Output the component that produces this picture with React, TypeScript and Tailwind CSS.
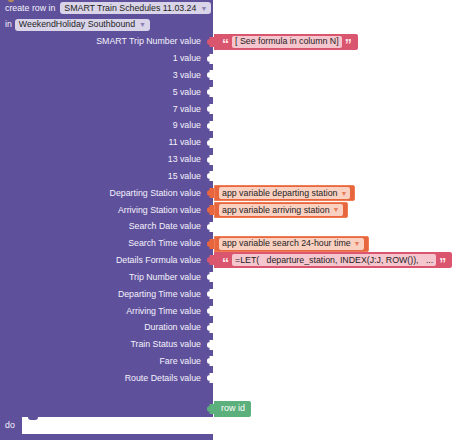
import React from "react";

const valueRows: { label: string; attach?: "trip" | "dep" | "arr" | "time" | "formula" }[] = [
  { label: "SMART Trip Number value", attach: "trip" },
  { label: "1 value" },
  { label: "3 value" },
  { label: "5 value" },
  { label: "7 value" },
  { label: "9 value" },
  { label: "11 value" },
  { label: "13 value" },
  { label: "15 value" },
  { label: "Departing Station value", attach: "dep" },
  { label: "Arriving Station value", attach: "arr" },
  { label: "Search Date value" },
  { label: "Search Time value", attach: "time" },
  { label: "Details Formula value", attach: "formula" },
  { label: "Trip Number value" },
  { label: "Departing Time value" },
  { label: "Arriving Time value" },
  { label: "Duration value" },
  { label: "Train Status value" },
  { label: "Fare value" },
  { label: "Route Details value" },
];

// cut-out on the block's right edge where a value plugs in
function Notch({ color = "#ffffff" }: { color?: string }) {
  return (
    <svg width="6" height="10" viewBox="0 0 6 10" className="shrink-0">
      <path d="M6 0 L6 10 L2.5 10 L2.5 7.5 C1 8 0 7 0 5 C0 3 1 2 2.5 2.5 L2.5 0 Z" fill={color} />
    </svg>
  );
}

function Tab({ color }: { color: string }) {
  return (
    <svg width="5" height="10" viewBox="0 0 5 10" className="shrink-0 -ml-[4px]">
      <path d="M5 0 L5 10 L2.5 10 L2.5 7.5 C1 8 0 7 0 5 C0 3 1 2 2.5 2.5 L2.5 0 Z" fill={color} />
    </svg>
  );
}

function Quote({ ch }: { ch: string }) {
  return (
    <span className="relative top-[2px] h-[13px] text-[14px] font-bold leading-none text-[#fde8ec] font-['Liberation_Sans',Arial,sans-serif]">
      {ch}
    </span>
  );
}

function TextBlock({ text }: { text: string }) {
  return (
    <div className="flex items-center">
      <Tab color="#d9566e" />
      <div className="flex h-[16px] items-center gap-[3px] rounded-r-[2px] bg-[#d9566e] pl-[8px] pr-[6px]">
        <Quote ch="“" />
        <span className="flex h-[12px] items-center rounded-[2px] bg-[#f6c6ce] px-[3px] text-[#1e1e1e] whitespace-pre">
          {text}
        </span>
        <Quote ch="”" />
      </div>
    </div>
  );
}

function VarBlock({ text }: { text: string }) {
  return (
    <div className="flex items-center">
      <Tab color="#e8663e" />
      <div className="flex h-[16px] items-center rounded-r-[2px] border border-[#f07d55] bg-[#e8663e] pl-[4px] pr-[4px]">
        <span className="flex h-[12px] items-center gap-[3px] rounded-[2px] bg-[#fad0c1] px-[3px] text-[#1e1e1e]">
          {text}
          <span className="text-[7px] text-[#e57b58]">▼</span>
        </span>
      </div>
    </div>
  );
}

function Attached({ kind }: { kind: string }) {
  if (kind === "trip") return <TextBlock text="[ See formula in column N]" />;
  if (kind === "dep") return <VarBlock text="app variable departing station" />;
  if (kind === "arr") return <VarBlock text="app variable arriving station" />;
  if (kind === "time") return <VarBlock text="app variable search 24-hour time" />;
  return <TextBlock text="=LET(   departure_station, INDEX(J:J, ROW()),   ..." />;
}

function Dropdown({ text }: { text: string }) {
  return (
    <span className="flex h-[12px] items-center gap-[4px] rounded-[3px] bg-[#d9d4e8] px-[4px] text-[#1e1e1e]">
      {text}
      <span className="text-[7px] text-[#8a80b3]">▼</span>
    </span>
  );
}

export default function App() {
  return (
    <div className="relative h-[440px] w-[474px] overflow-hidden bg-white text-[8.8px] leading-none text-[#f4f2fb] font-['Liberation_Sans',Arial,sans-serif]">
      <div className="absolute left-[8px] top-0 h-[2px] w-[6px] rounded-b-sm bg-[#b08a5a]" />
      <div className="flex flex-col">
        <div className="flex h-[16px] w-[213px] items-center gap-[5px] bg-[#5f509b] pl-[5px]">
          <span>create row in</span>
          <Dropdown text="SMART Train Schedules 11.03.24" />
        </div>
        <div className="flex h-[17.3px] w-[213px] items-center gap-[3px] bg-[#5f509b] pl-[5px]">
          <span>in</span>
          <Dropdown text="WeekendHoliday Southbound" />
        </div>

        {valueRows.map((r) => (
          <div key={r.label} className="flex h-[16.83px] items-center">
            <div className="flex h-full w-[213px] shrink-0 items-center justify-end bg-[#5f509b]">
              <span className="mr-[6px]">{r.label}</span>
              <Notch
                color={
                  r.attach
                    ? r.attach === "trip" || r.attach === "formula"
                      ? "#d9566e"
                      : "#e8663e"
                    : "#ffffff"
                }
              />
            </div>
            {r.attach && <Attached kind={r.attach} />}
          </div>
        ))}

        <div className="h-[14.3px] w-[213px] bg-[#5f509b]" />

        <div className="flex h-[16px] items-center">
          <div className="flex h-full w-[213px] shrink-0 items-center justify-end bg-[#5f509b]">
            <Notch color="#5cb07c" />
          </div>
          <div className="flex items-center">
            <Tab color="#5cb07c" />
            <div className="flex h-[16px] items-center rounded-r-[2px] bg-[#5cb07c] pl-[7px] pr-[6px] text-[9px] text-white">
              row id
            </div>
          </div>
        </div>

        <div className="flex h-[17px] items-stretch">
          <div className="flex w-[22px] shrink-0 items-center bg-[#5f509b] pl-[5px]">do</div>
          <div className="relative flex-1 rounded-tl-[5px] bg-white">
            <div className="absolute left-[6px] top-0 h-[3px] w-[10px] rounded-b-[3px] bg-[#5f509b]" />
          </div>
        </div>
        <div className="h-[8px] w-[213px] rounded-bl-[2px] bg-[#5f509b]" />
      </div>
    </div>
  );
}
